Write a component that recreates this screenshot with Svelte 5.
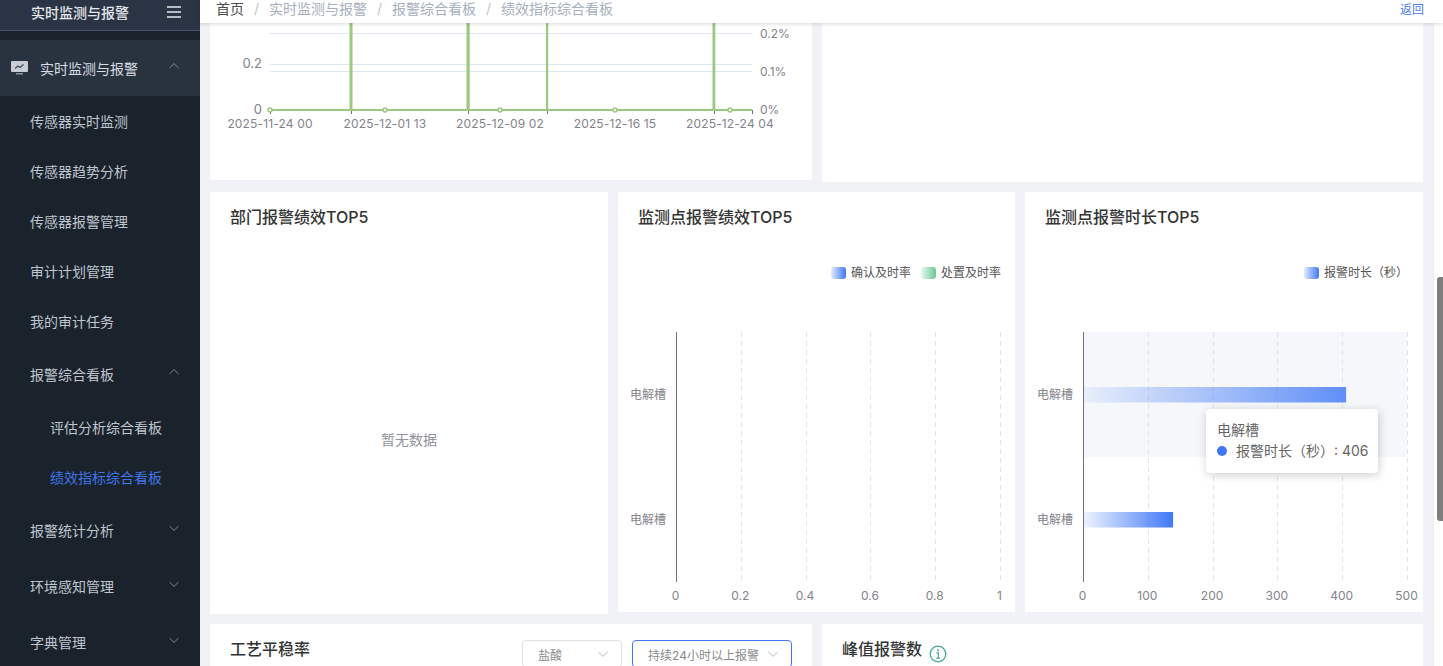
<script>
  // sidebar entries, in order; kind decides the row style
  const menu = [
    { label: "传感器实时监测", kind: "item" },
    { label: "传感器趋势分析", kind: "item" },
    { label: "传感器报警管理", kind: "item" },
    { label: "审计计划管理", kind: "item" },
    { label: "我的审计任务", kind: "item" },
    { label: "报警综合看板", kind: "group", open: true },
    { label: "评估分析综合看板", kind: "sub" },
    { label: "绩效指标综合看板", kind: "sub", active: true },
    { label: "报警统计分析", kind: "group" },
    { label: "环境感知管理", kind: "group" },
    { label: "字典管理", kind: "group" },
  ];

  const crumbs = ["实时监测与报警", "报警综合看板", "绩效指标综合看板"];

  // top trend chart
  const spikes = [
    { x: 350.5, w: 1 },
    { x: 467.5, w: 1.2 },
    { x: 547, w: 0.2 },
    { x: 713.5, w: 0.8 },
  ];
  const topTicks = [
    { x: 270, label: "2025-11-24 00" },
    { x: 385, label: "2025-12-01 13" },
    { x: 500, label: "2025-12-09 02" },
    { x: 615, label: "2025-12-16 15" },
    { x: 730, label: "2025-12-24 04" },
  ];
  function trendPath() {
    let d = "M270 110";
    for (const s of spikes) {
      d += ` H${s.x} V20 H${s.x + s.w} V110`;
    }
    return d + " H752";
  }

  // bar chart geometry, in page coordinates through the viewBox
  const plotTop = 332;
  const plotBottom = 582;
  const band = (plotBottom - plotTop) / 2;
  const rows = ["电解槽", "电解槽"];

  const rateTicks = ["0", "0.2", "0.4", "0.6", "0.8", "1"];
  const timeTicks = ["0", "100", "200", "300", "400", "500"];
  const timeBars = [406, 139];

  const rateX0 = 676;
  const timeX0 = 1083;
  const step = 64.8;

  // keep the 1px lines on the pixel grid
  const crisp = (x) => Math.round(x) + 0.5;
</script>

{#snippet chevron(up)}
  <svg class="chevron" class:up width="12" height="12" viewBox="0 0 12 12" aria-hidden="true">
    <path d="M1.5 4 L6 8.4 L10.5 4" fill="none" stroke="currentColor" stroke-width="1" />
  </svg>
{/snippet}

<div class="app">
  <aside class="sidebar">
    <div class="brand">
      <span class="brand-title">实时监测与报警</span>
      <svg width="14" height="12" viewBox="0 0 14 12" aria-hidden="true">
        <path d="M0 1 H14 M0 6 H14 M0 11 H14" stroke="#e6e9ee" stroke-width="1.5" fill="none" />
      </svg>
    </div>
    <div class="root-item">
      <svg class="root-icon" width="17" height="14" viewBox="0 0 17 14" aria-hidden="true">
        <rect x="0" y="0" width="17" height="11" rx="1" fill="#c9ced6" />
        <rect x="5" y="12" width="7" height="1.5" fill="#8d95a1" />
        <path d="M4 7.5 L7 5 L9 6.5 L12.5 3.5" fill="none" stroke="#3a4553" stroke-width="1.1" />
      </svg>
      <span class="root-label">实时监测与报警</span>
      {@render chevron(true)}
    </div>
    {#each menu as entry}
      <div class="entry {entry.kind}" class:active={entry.active}>
        <span>{entry.label}</span>
        {#if entry.kind === "group"}
          {@render chevron(entry.open)}
        {/if}
      </div>
    {/each}
  </aside>

  <div class="right">
    <header class="topbar">
      <nav class="crumbs">
        <span class="crumb-home">首页</span>
        {#each crumbs as c}
          <span class="crumb-sep">/</span>
          <span class="crumb">{c}</span>
        {/each}
      </nav>
      <span class="back">返回</span>
    </header>

    <div class="body">
      <main class="content">
        <section class="row two">
          <div class="card trend">
            <svg class="chart" width="602" height="157" viewBox="210 23 602 157">
              {#each [33.5, 64.5, 71.5] as y}
                <line x1="270" x2="752" y1={y} y2={y} class="grid" />
              {/each}
              <line x1="270" x2="752" y1="110.5" y2="110.5" class="axis" />
              {#each [270.5, 351.5, 468.5, 547.5, 714.5, 752.5] as x}
                <line x1={x} x2={x} y1="110" y2="114" class="axis" />
              {/each}
              <path d={trendPath()} class="trend-line" />
              {#each topTicks as t}
                <circle cx={t.x} cy="110" r="2" class="trend-dot" />
                <text x={t.x} y="128" text-anchor="middle" class="tick wide">{t.label}</text>
              {/each}
              <text x="262" y="68" text-anchor="end" class="tick big">0.2</text>
              <text x="262" y="114" text-anchor="end" class="tick big">0</text>
              <text x="760" y="38" class="tick">0.2%</text>
              <text x="760" y="76" class="tick">0.1%</text>
              <text x="760" y="114" class="tick">0%</text>
            </svg>
          </div>
          <div class="card blank"></div>
        </section>

        <section class="row three">
          <div class="card empty-card">
            <h3 class="card-title">部门报警绩效TOP5</h3>
            <div class="empty">暂无数据</div>
          </div>

          <div class="card bar-card">
            <h3 class="card-title">监测点报警绩效TOP5</h3>
            <div class="legend">
              <span class="swatch blue"></span><span>确认及时率</span>
              <span class="swatch green"></span><span>处置及时率</span>
            </div>
            <svg class="chart" width="397" height="333" viewBox="618 279 397 333">
              {#each rateTicks as t, i}
                {#if i > 0}
                  <line x1={crisp(rateX0 + i * step)} x2={crisp(rateX0 + i * step)} y1={plotTop} y2={plotBottom} class="dash" />
                {/if}
                <text x={rateX0 - 0.5 + i * step} y="600" text-anchor="middle" class="tick">{t}</text>
              {/each}
              <line x1={rateX0 + 0.5} x2={rateX0 + 0.5} y1={plotTop} y2={plotBottom} class="y-axis" />
              {#each rows as r, i}
                <text x="666" y={plotTop + band * (i + 0.5) + 4} text-anchor="end" class="cat">{r}</text>
              {/each}
            </svg>
          </div>

          <div class="card bar-card">
            <h3 class="card-title">监测点报警时长TOP5</h3>
            <div class="legend time">
              <span class="swatch blue"></span><span>报警时长（秒）</span>
            </div>
            <svg class="chart" width="398" height="333" viewBox="1025 279 398 333">
              <defs>
                <linearGradient id="barFill" x1="0" x2="1" y1="0" y2="0">
                  <stop offset="0" stop-color="#3f78f7" stop-opacity="0.08" />
                  <stop offset="1" stop-color="#3f78f7" />
                </linearGradient>
              </defs>
              <rect x={timeX0} y={plotTop} width={5 * step} height={band} class="hover-band" />
              {#each timeTicks as t, i}
                {#if i > 0}
                  <line x1={crisp(timeX0 + i * step)} x2={crisp(timeX0 + i * step)} y1={plotTop} y2={plotBottom} class="dash blueish" />
                {/if}
                <text x={timeX0 - 0.5 + i * step} y="600" text-anchor="middle" class="tick">{t}</text>
              {/each}
              {#each timeBars as v, i}
                <rect
                  x={timeX0}
                  y={plotTop + band * (i + 0.5) - 7.5}
                  width={(v / 100) * step}
                  height="15.5"
                  fill="url(#barFill)"
                  opacity={i === 0 ? 0.82 : 1}
                />
              {/each}
              <line x1={timeX0 + 0.5} x2={timeX0 + 0.5} y1={plotTop} y2={plotBottom} class="y-axis" />
              {#each rows as r, i}
                <text x="1073" y={plotTop + band * (i + 0.5) + 4} text-anchor="end" class="cat">{r}</text>
              {/each}
            </svg>
            <div class="tooltip">
              <div>电解槽</div>
              <div class="tip-row"><span class="tip-dot"></span>报警时长（秒）: 406</div>
            </div>
          </div>
        </section>

        <section class="row two">
          <div class="card low">
            <div class="low-head">
              <h3 class="card-title bare">工艺平稳率</h3>
              <div class="selects">
                <div class="select acid"><span>盐酸</span>{@render chevron(false)}</div>
                <div class="select focus"><span>持续24小时以上报警</span>{@render chevron(false)}</div>
              </div>
            </div>
          </div>
          <div class="card low">
            <div class="low-head start">
              <h3 class="card-title bare">峰值报警数</h3>
              <svg class="info" width="18" height="18" viewBox="0 0 18 18" aria-hidden="true">
                <circle cx="9" cy="9" r="7.8" fill="none" stroke="#4ba89f" stroke-width="1.3" />
                <circle cx="9" cy="5.2" r="1" fill="#4ba89f" />
                <path d="M7.4 7.8 H9.4 V13 M7.2 13.2 H11" fill="none" stroke="#4ba89f" stroke-width="1.2" />
              </svg>
            </div>
          </div>
        </section>
      </main>

      <div class="track"><div class="thumb"></div></div>
    </div>
  </div>
</div>

<style>
  :global(body) {
    margin: 0;
    overflow: hidden;
  }

  .app {
    display: flex;
    height: 666px;
    overflow: hidden;
    font-family: "Inter", "Noto Sans CJK SC", sans-serif;
    background: #f0f2f5;
  }

  /* sidebar */
  .sidebar {
    width: 200px;
    flex-shrink: 0;
    background: #1a222b;
    color: #bfc6cf;
    font-size: 14px;
  }

  .brand {
    display: flex;
    align-items: center;
    justify-content: space-between;
    height: 31px;
    box-sizing: border-box;
    padding: 0 19px 7px 31px;
    background: #2a3444;
    border-bottom: 1px solid #46536a;
    color: #e4e7ec;
    font-weight: 500;
    margin-bottom: 9px;
  }

  .root-item {
    display: flex;
    align-items: center;
    height: 56px;
    padding: 0 20px 0 11px;
    background: #29333f;
    color: #d8dce2;
  }

  .root-icon {
    margin-right: 12px;
  }

  .root-label {
    flex: 1;
  }

  .entry {
    display: flex;
    align-items: center;
    padding: 0 20px 0 30px;
    height: 50px;
  }

  .entry span {
    flex: 1;
  }

  .entry.group {
    height: 56px;
  }

  .entry.sub {
    padding-left: 50px;
  }

  .entry.active {
    color: #3f76e8;
  }

  .chevron {
    color: #7d8894;
    flex-shrink: 0;
  }

  .chevron.up {
    transform: rotate(180deg);
  }

  .sidebar .chevron {
    margin-bottom: 4px;
  }

  /* top bar */
  .right {
    flex: 1;
    min-width: 0;
    display: flex;
    flex-direction: column;
  }

  .topbar {
    display: flex;
    align-items: center;
    justify-content: space-between;
    height: 23px;
    flex-shrink: 0;
    box-sizing: border-box;
    padding: 0 19px 7px 16px;
    background: #fff;
    box-shadow: 0 1px 4px rgba(0, 21, 41, 0.16);
    position: relative;
    z-index: 2;
  }

  .crumbs {
    display: flex;
    align-items: center;
    font-size: 14px;
    color: #a6afc0;
  }

  .crumb-home {
    color: #4a4a4a;
  }

  .crumb-sep {
    margin: 0 9px 0 10px;
    color: #c0c4cc;
    width: 6px;
  }

  .back {
    font-size: 12px;
    color: #4a7cf0;
  }

  /* content */
  .body {
    flex: 1;
    display: flex;
    min-height: 0;
  }

  .content {
    flex: 1;
    min-width: 0;
    padding: 0 10px;
  }

  .row {
    display: grid;
    gap: 10px;
    align-items: start;
    margin-bottom: 10px;
  }

  .row.two {
    grid-template-columns: 602px 601px;
  }

  .row.three {
    grid-template-columns: 398px 397px 398px;
  }

  .card {
    background: #fff;
    position: relative;
    overflow: hidden;
  }

  .trend {
    height: 157px;
  }

  .blank {
    height: 159px;
  }

  .chart {
    display: block;
  }

  .card-title {
    margin: 0;
    height: 50px;
    box-sizing: border-box;
    padding: 14px 20px 0;
    font-size: 16px;
    line-height: 22px;
    font-weight: 500;
    color: #333;
  }

  .card-title.bare {
    height: auto;
    padding: 0;
  }

  .empty-card {
    height: 422px;
    display: flex;
    flex-direction: column;
  }

  .empty {
    flex: 1;
    display: flex;
    align-items: center;
    justify-content: center;
    padding-top: 22px;
    font-size: 14px;
    color: #909399;
  }

  .bar-card {
    height: 420px;
    overflow: visible;
  }

  .legend {
    display: flex;
    align-items: center;
    justify-content: flex-end;
    height: 12px;
    padding: 25px 14px 0 0;
    font-size: 12px;
    line-height: 12px;
    color: #555;
  }

  .legend.time {
    padding-right: 15px;
  }

  .swatch {
    width: 15px;
    height: 12px;
    border-radius: 3px;
    margin: 0 5px 0 10px;
  }

  .swatch.blue {
    background: linear-gradient(to right, #e4ecfe, #3f78f7);
  }

  .swatch.green {
    background: linear-gradient(to right, #eaf7f0, #6cc795);
  }

  .grid {
    stroke: #e0e6f1;
    stroke-width: 1;
  }

  .axis {
    stroke: #6e7079;
    stroke-width: 1;
  }

  .trend-line {
    fill: none;
    stroke: #9bc97f;
    stroke-width: 2;
  }

  .trend-dot {
    fill: #fff;
    stroke: #9bc97f;
    stroke-width: 1.5;
  }

  .tick {
    font-size: 12px;
    fill: #83838a;
    font-family: "Inter", "Noto Sans CJK SC", sans-serif;
  }

  .tick.wide {
    letter-spacing: 0.15px;
  }

  .tick.big {
    font-size: 13px;
  }

  .cat {
    font-size: 12px;
    fill: #85858c;
    font-family: "Inter", "Noto Sans CJK SC", sans-serif;
  }

  .dash {
    stroke: #e3e3ea;
    stroke-dasharray: 5 4;
    stroke-width: 1;
  }

  .dash.blueish {
    stroke: #dfe4f4;
  }

  .y-axis {
    stroke: #6e7079;
    stroke-width: 1;
  }

  .hover-band {
    fill: #f5f7fb;
  }

  .tooltip {
    position: absolute;
    left: 181px;
    top: 217px;
    width: 172px;
    height: 64px;
    box-sizing: border-box;
    padding: 10px 11px;
    background: #fff;
    border-radius: 4px;
    box-shadow: 1px 2px 10px rgba(0, 0, 0, 0.2);
    font-size: 14px;
    line-height: 21px;
    color: #666;
  }

  .tip-row {
    display: flex;
    align-items: center;
    white-space: nowrap;
  }

  .tip-dot {
    width: 10px;
    height: 10px;
    flex-shrink: 0;
    border-radius: 50%;
    background: #3f78f7;
    margin-right: 9px;
  }

  .low {
    height: 300px;
  }

  .low-head {
    display: flex;
    align-items: flex-start;
    justify-content: space-between;
    padding: 14px 20px 0 20px;
  }

  .low-head.start {
    justify-content: flex-start;
  }

  .selects {
    display: flex;
    gap: 10px;
    margin-top: 2px;
  }

  .select {
    display: flex;
    align-items: center;
    justify-content: space-between;
    height: 28px;
    box-sizing: border-box;
    padding: 0 12px 0 15px;
    border: 1px solid #dcdfe6;
    border-radius: 4px;
    font-size: 12px;
    color: #8a8a8a;
  }

  .select.acid {
    width: 100px;
  }

  .select.focus {
    width: 160px;
    border-color: #3f78f7;
  }

  .select .chevron {
    color: #b4b8c0;
  }

  .info {
    margin: 7px 0 0 7px;
  }

  /* scrollbar column */
  .track {
    width: 10px;
    flex-shrink: 0;
    box-sizing: border-box;
    background: #fff;
    border-left: 1px solid #ececec;
    padding: 254px 0 0 3px;
  }

  .thumb {
    height: 244px;
    background: #7f7f7f;
    border-radius: 3px 0 0 3px;
  }
</style>
